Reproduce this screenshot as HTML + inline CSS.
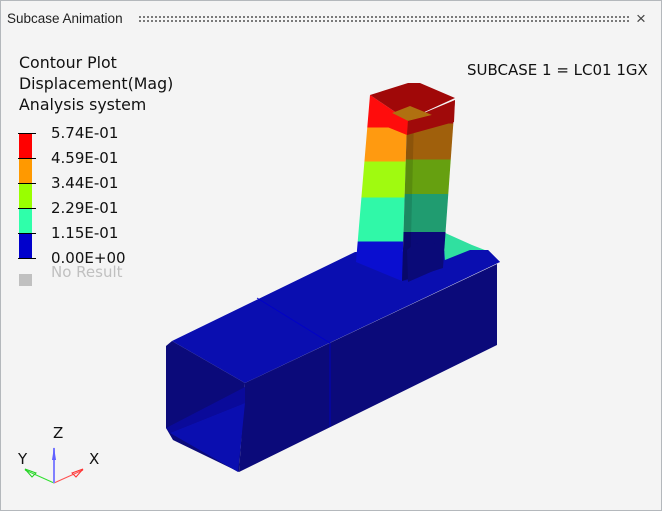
<!DOCTYPE html>
<html><head><meta charset="utf-8"><style>
html,body{margin:0;padding:0;}
body{width:662px;height:511px;background:#f4f4f4;overflow:hidden;position:relative;font-family:"DejaVu Sans","Liberation Sans",sans-serif;}
.frame{position:absolute;left:0;top:0;width:660px;height:509px;border:1px solid #b4b8bc;}
.t{position:absolute;white-space:nowrap;color:#111;}
</style></head><body>
<div class="frame"></div>
<div class="t" style="left:7px;top:11px;font-family:'Liberation Sans',sans-serif;font-size:13.5px;color:#222;">Subcase Animation</div>
<div style="position:absolute;left:138px;top:15px;width:492px;height:8px;background-image:radial-gradient(circle,#666 0.9px,transparent 1.2px);background-size:4px 4px;"></div>
<div class="t" style="left:636px;top:9px;font-family:'Liberation Sans',sans-serif;font-size:17px;color:#444;">×</div>
<svg width="662" height="511" style="position:absolute;left:0;top:0">
<defs>
<linearGradient id="lf" gradientUnits="userSpaceOnUse" x1="0" y1="95" x2="0" y2="285">
<stop offset="0" stop-color="#ff0c0c"/><stop offset="0.17" stop-color="#ff0c0c"/>
<stop offset="0.17" stop-color="#ff9a10"/><stop offset="0.35" stop-color="#ff9a10"/>
<stop offset="0.35" stop-color="#a0fa10"/><stop offset="0.54" stop-color="#a0fa10"/>
<stop offset="0.54" stop-color="#30f8a8"/><stop offset="0.77" stop-color="#30f8a8"/>
<stop offset="0.77" stop-color="#0a0ed0"/><stop offset="1" stop-color="#0a0ed0"/>
</linearGradient>
<linearGradient id="rf" gradientUnits="userSpaceOnUse" x1="0" y1="95" x2="0" y2="285">
<stop offset="0" stop-color="#a00a0a"/><stop offset="0.15" stop-color="#a00a0a"/>
<stop offset="0.15" stop-color="#a0600c"/><stop offset="0.34" stop-color="#a0600c"/>
<stop offset="0.34" stop-color="#66a010"/><stop offset="0.52" stop-color="#66a010"/>
<stop offset="0.52" stop-color="#209c70"/><stop offset="0.72" stop-color="#209c70"/>
<stop offset="0.72" stop-color="#0a0a78"/><stop offset="1" stop-color="#0a0a78"/>
</linearGradient>
</defs>
<!-- box -->
<polygon points="172,341 355,252 488,250 500,262 245,383" fill="#0a0eb0"/>
<polygon points="245,383 497,264 497,345 239,472" fill="#0b0a7a"/>
<polygon points="166,346 172,341 245,383 239,472 173,440 166,428" fill="#0b0a7a"/>
<polygon points="166,428 245,387 245,403 170,433" fill="#0a0a9a"/>
<polygon points="170,433 245,403 238,472" fill="#0a0eb0"/>
<line x1="257" y1="298" x2="330" y2="343" stroke="#0000c8" stroke-width="0.8"/>
<line x1="330" y1="343" x2="330" y2="427" stroke="#0000c8" stroke-width="0.8"/>
<!-- flange -->
<polygon points="443,232 472,245 490,252 478,250 445,262" fill="#30e0a0"/>
<polygon points="440,262 470,250 488,250 500,262 440,272" fill="#0a0eb0"/>
<!-- column -->
<polygon points="370,95 407,120 402,281 356,262" fill="url(#lf)"/>
<polygon points="407,120 455,100 443,268 402,281" fill="url(#rf)"/>
<polygon points="407,120 414,118 410,280 402,281" fill="#000" opacity="0.12"/>
<path d="M408,282 L407,250 Q420,238 436,244 L440,268 Z" fill="#0a0a78"/>
<polygon points="370,95 408,83 420,83 455,98 407,120" fill="#a00808"/>
<polygon points="392,113 410,106 432,115 408,121" fill="#b07010"/>
<polygon points="370,95 392,113 408,121 407,135 370,120" fill="#ff0c0c"/>
<polygon points="408,121 432,115 455,100 454,122 407,135" fill="#a00a0a"/>
<!-- legend -->
<rect x="19" y="133" width="13" height="25" fill="#ff0000"/>
<rect x="19" y="158" width="13" height="25" fill="#ff9900"/>
<rect x="19" y="183" width="13" height="25" fill="#99ff00"/>
<rect x="19" y="208" width="13" height="25" fill="#2fffaa"/>
<rect x="19" y="233" width="13" height="25" fill="#0000cc"/>
<g stroke="#000" stroke-width="1">
<line x1="18" y1="133.5" x2="36" y2="133.5"/><line x1="18" y1="158.5" x2="36" y2="158.5"/>
<line x1="18" y1="183.5" x2="36" y2="183.5"/><line x1="18" y1="208.5" x2="36" y2="208.5"/>
<line x1="18" y1="233.5" x2="36" y2="233.5"/><line x1="18" y1="258.5" x2="36" y2="258.5"/>
</g>
<rect x="19" y="274" width="13" height="12" fill="#c0c0c0"/>
<!-- axes -->
<line x1="54" y1="483" x2="83" y2="470" stroke="#ff5050" stroke-width="1"/>
<polygon points="72,473 83,469 76,477" fill="none" stroke="#ff3030"/>
<line x1="54" y1="483" x2="25" y2="470" stroke="#30e030" stroke-width="1"/>
<polygon points="36,473 25,469 32,477" fill="none" stroke="#20d020"/>
<line x1="54" y1="483" x2="54" y2="448" stroke="#8080ff" stroke-width="2"/>
<polygon points="52,460 54,447 56,460" fill="#6060ff"/>
</svg>
<div class="t" style="left:19px;top:52px;font-size:15.8px;line-height:21px;">Contour Plot<br>Displacement(Mag)<br>Analysis system</div>
<div class="t" style="left:51px;top:121px;font-size:15px;line-height:25px;">5.74E-01<br>4.59E-01<br>3.44E-01<br>2.29E-01<br>1.15E-01<br>0.00E+00</div>
<div class="t" style="left:51px;top:263px;font-size:15px;color:#c0c0c0;">No Result</div>
<div class="t" style="left:467px;top:61px;font-size:15px;">SUBCASE 1 = LC01 1GX</div>
<div class="t" style="left:53px;top:424px;font-size:15px;">Z</div>
<div class="t" style="left:18px;top:450px;font-size:15px;">Y</div>
<div class="t" style="left:89px;top:450px;font-size:15px;">X</div>
</body></html>
